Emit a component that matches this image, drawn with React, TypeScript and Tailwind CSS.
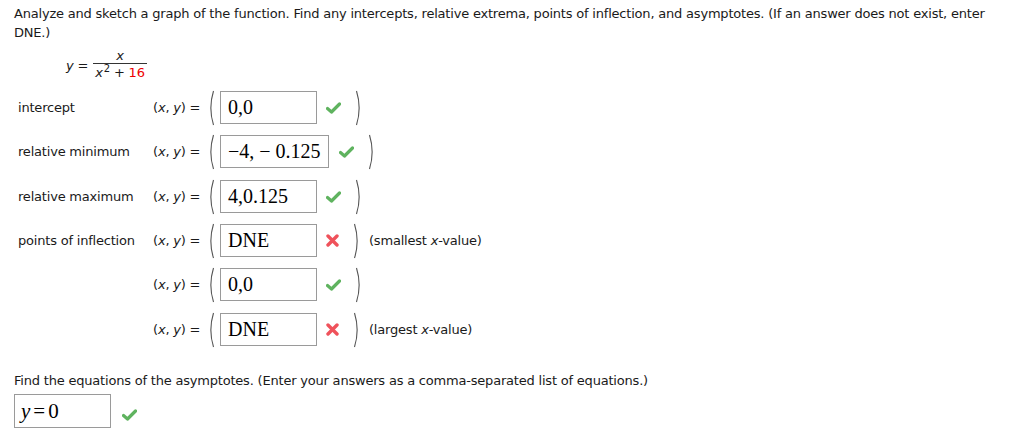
import React from 'react';

const sans = { fontFamily: '"DejaVu Sans", Verdana, sans-serif' };
const serif = { fontFamily: '"Liberation Serif", "Times New Roman", serif' };

function Check() {
  return (
    <svg width="15" height="12" viewBox="0 0 15 12" className="shrink-0">
      <path d="M1.5 6.5 L5.5 10 L13.5 2" fill="none" stroke="#5fb35f" strokeWidth="3.2" strokeLinecap="round" strokeLinejoin="round" />
    </svg>
  );
}

function Cross() {
  return (
    <svg width="13" height="13" viewBox="0 0 13 13" className="shrink-0">
      <path d="M2 2 L11 11 M11 2 L2 11" stroke="#ef525b" strokeWidth="3.4" strokeLinecap="round" />
    </svg>
  );
}

function Paren({ side }: { side: 'l' | 'r' }) {
  return (
    <svg width="8" height="36" viewBox="0 0 8 36" className="shrink-0">
      {side === 'l' ? (
        <path d="M6.5 1 Q1.2 18 6.5 35" fill="none" stroke="#555" strokeWidth="1.1" />
      ) : (
        <path d="M1.5 1 Q6.8 18 1.5 35" fill="none" stroke="#555" strokeWidth="1.1" />
      )}
    </svg>
  );
}

type Row = { label?: string; value: string; ok: boolean; note?: React.ReactNode; wide?: boolean };

const rows: Row[] = [
  { label: 'intercept', value: '0,0', ok: true },
  { label: 'relative minimum', value: '−4, − 0.125', ok: true, wide: true },
  { label: 'relative maximum', value: '4,0.125', ok: true },
  { label: 'points of inflection', value: 'DNE', ok: false, note: <>(smallest <i>x</i>-value)</> },
  { value: '0,0', ok: true },
  { value: 'DNE', ok: false, note: <>(largest <i>x</i>-value)</> },
];

export default function App() {
  return (
    <div className="w-[1024px] h-[443px] bg-white text-[#1a1a1a] text-[13px] leading-[19px] tracking-[-0.2px] overflow-hidden" style={sans}>
      <p className="pl-[14px] pt-[4px]">
        <span className="whitespace-nowrap">
          Analyze and sketch a graph of the function. Find any intercepts, relative extrema, points of inflection, and asymptotes. (If an answer does not exist, enter
        </span>
        <br />
        DNE.)
      </p>

      {/* formula */}
      <div className="flex items-center pl-[66px] mt-[6px] h-[34px]">
        <span className="italic">y</span>
        <span className="ml-[4px]">=</span>
        <div className="ml-[5px] flex flex-col items-center">
          <span className="italic leading-[15px] px-[2px]">x</span>
          <span className="border-t border-[#333] leading-[16px] pt-[1px] px-[2px] whitespace-nowrap">
            <i>x</i>
            <span className="relative -top-[5px] text-[10px] ml-[1px]">2</span>
            <span className="mx-[4px]">+</span>
            <span className="text-[#e00]">16</span>
          </span>
        </div>
      </div>

      {/* answer rows */}
      <div className="flex flex-col pl-[18px] mt-[9px] gap-[11px]">
        {rows.map((r, i) => (
          <div key={i} className={`flex items-center h-[33px] ${i === 2 || i === 5 ? 'mt-[1px]' : ''}`}>
            <span className="w-[135px] shrink-0">{r.label}</span>
            <span className="w-[52px] shrink-0 whitespace-nowrap">
              (<i>x</i>, <i>y</i>) =
            </span>
            <span className="ml-[2px]"><Paren side="l" /></span>
            <div
              className={`ml-[5px] h-[33px] border border-[#9a9a9a] flex items-center px-[7px] text-[20px] text-black tracking-normal ${r.wide ? '' : 'w-[97px]'}`}
              style={serif}
            >
              {r.value}
            </div>
            <span className={r.wide ? 'ml-[10px]' : 'ml-[9px]'}>{r.ok ? <Check /> : <Cross />}</span>
            <span className="ml-[14px]"><Paren side="r" /></span>
            {r.note && <span className="ml-[8px] whitespace-nowrap">{r.note}</span>}
          </div>
        ))}
      </div>

      {/* asymptotes */}
      <p className="pl-[14px] mt-[25px]">
        Find the equations of the asymptotes. (Enter your answers as a comma-separated list of equations.)
      </p>
      <div className="flex items-center pl-[14px] mt-[4px]">
        <div className="w-[97px] h-[34px] border border-[#9a9a9a] flex items-center px-[6px] text-[21px] text-black tracking-normal" style={serif}>
          <i>y</i>
          <span className="mx-[3px]">=</span>
          0
        </div>
        <span className="ml-[11px] mt-[7px]"><Check /></span>
      </div>
    </div>
  );
}
